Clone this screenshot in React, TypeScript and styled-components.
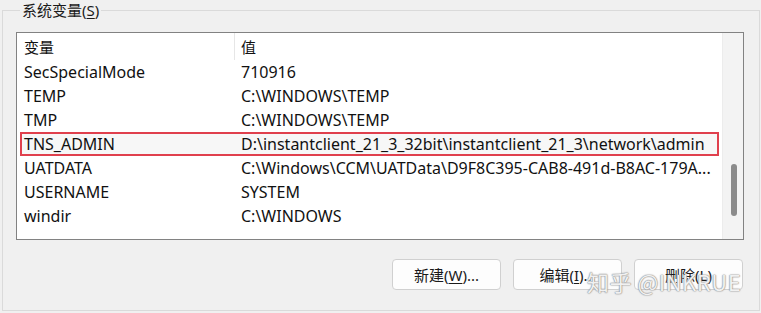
import styled, { createGlobalStyle } from 'styled-components';

const GlobalStyle = createGlobalStyle`
  html, body {
    margin: 0;
    padding: 0;
    background: #f0f0f0;
  }
  body {
    font-family: "Noto Sans", "Noto Sans CJK SC", sans-serif;
    color: #111;
  }
`;

const rows = [
  { name: 'SecSpecialMode', value: '710916' },
  { name: 'TEMP', value: 'C:\\WINDOWS\\TEMP' },
  { name: 'TMP', value: 'C:\\WINDOWS\\TEMP' },
  { name: 'TNS_ADMIN', value: 'D:\\instantclient_21_3_32bit\\instantclient_21_3\\network\\admin', selected: true },
  { name: 'UATDATA', value: 'C:\\Windows\\CCM\\UATData\\D9F8C395-CAB8-491d-B8AC-179A...' },
  { name: 'USERNAME', value: 'SYSTEM' },
  { name: 'windir', value: 'C:\\WINDOWS' },
];

const Page = styled.div`
  position: relative;
  width: 761px;
  height: 313px;
  padding-left: 2px;
  box-sizing: border-box;
  overflow: hidden;
`;

const GroupBox = styled.fieldset`
  margin: 0;
  width: 758px;
  height: 311px;
  box-sizing: border-box;
  border: 1px solid #dadada;
  padding: 12px 0 0 13px;
`;

const Legend = styled.legend`
  margin-left: 4px;
  padding: 0 2px;
  font-size: 15px;
  line-height: 20px;
  color: #1a1a1a;
`;

const Key = styled.span`
  text-decoration: underline;
  text-underline-offset: 2px;
`;

const ListBox = styled.div`
  display: flex;
  width: 728px;
  height: 208px;
  box-sizing: border-box;
  border: 1px solid #828282;
  background: #fff;
`;

const Table = styled.div`
  flex: 1;
  display: flex;
  flex-direction: column;
  padding: 0 3px;
`;

const HeaderRow = styled.div`
  display: grid;
  grid-template-columns: 214px 1fr;
  height: 27px;
  align-items: stretch;
  font-size: 15px;
`;

const HeaderCell = styled.div<{ $sep?: boolean }>`
  display: flex;
  align-items: center;
  padding-left: ${(p) => (p.$sep ? '6px' : '4px')};
  border-left: ${(p) => (p.$sep ? '1px solid #e6e6e6' : 'none')};
`;

const Row = styled.div<{ $selected?: boolean }>`
  display: grid;
  grid-template-columns: 221px 1fr;
  height: 24px;
  align-items: center;
  font-size: 16px;
  line-height: 20px;
  white-space: nowrap;
  background: ${(p) => (p.$selected ? '#f7f7f7' : 'transparent')};
  box-shadow: ${(p) => (p.$selected ? 'inset 0 0 0 2px #e0404d' : 'none')};
`;

const Cell = styled.div`
  padding-left: 4px;
  overflow: hidden;
`;

const ValueCell = styled.div`
  overflow: hidden;
`;

const ScrollTrack = styled.div`
  width: 20px;
  background: #f3f3f3;
  border-left: 1px solid #ececec;
  display: flex;
  justify-content: center;
`;

const Thumb = styled.div`
  width: 6px;
  background: #8b8b8b;
  border-radius: 3px;
  margin-left: 1px;
  align-self: flex-start;
`;

const ButtonBar = styled.div`
  display: flex;
  justify-content: flex-end;
  gap: 12px;
  width: 727px;
  margin-top: 19px;
`;

const Button = styled.button`
  width: 109px;
  height: 31px;
  box-sizing: border-box;
  border: 1px solid #d0d0d0;
  border-radius: 4px;
  background: #fdfdfd;
  font-family: "Noto Sans", "Noto Sans CJK SC", sans-serif;
  font-size: 15px;
  color: #1a1a1a;
  padding: 0;
`;

const Watermark = styled.div`
  position: absolute;
  left: 587px;
  top: 266px;
  font-family: "Noto Sans CJK SC", sans-serif;
  font-size: 22px;
  line-height: 30px;
  letter-spacing: 0.5px;
  color: rgba(255, 255, 255, 0.88);
  text-shadow: 0 0 1px #8f8f8f, 0 0 1px #8f8f8f, 0 0 2px #a0a0a0;
  white-space: nowrap;
  pointer-events: none;
`;

export default function App() {
  const thumbTop = 131;
  const thumbHeight = 52;
  return (
    <>
      <GlobalStyle />
      <Page>
        <GroupBox>
          <Legend>
            系统变量(<Key>S</Key>)
          </Legend>
          <ListBox>
            <Table>
              <HeaderRow>
                <HeaderCell>变量</HeaderCell>
                <HeaderCell $sep>值</HeaderCell>
              </HeaderRow>
              {rows.map((r) => (
                <Row key={r.name} $selected={r.selected}>
                  <Cell>{r.name}</Cell>
                  <ValueCell>{r.value}</ValueCell>
                </Row>
              ))}
            </Table>
            <ScrollTrack>
              <Thumb style={{ marginTop: thumbTop, height: thumbHeight }} />
            </ScrollTrack>
          </ListBox>
          <ButtonBar>
            <Button>
              新建(<Key>W</Key>)...
            </Button>
            <Button>
              编辑(<Key>I</Key>)...
            </Button>
            <Button>
              删除(<Key>L</Key>)
            </Button>
          </ButtonBar>
        </GroupBox>
        <Watermark>知乎 @INKRUE</Watermark>
      </Page>
    </>
  );
}
